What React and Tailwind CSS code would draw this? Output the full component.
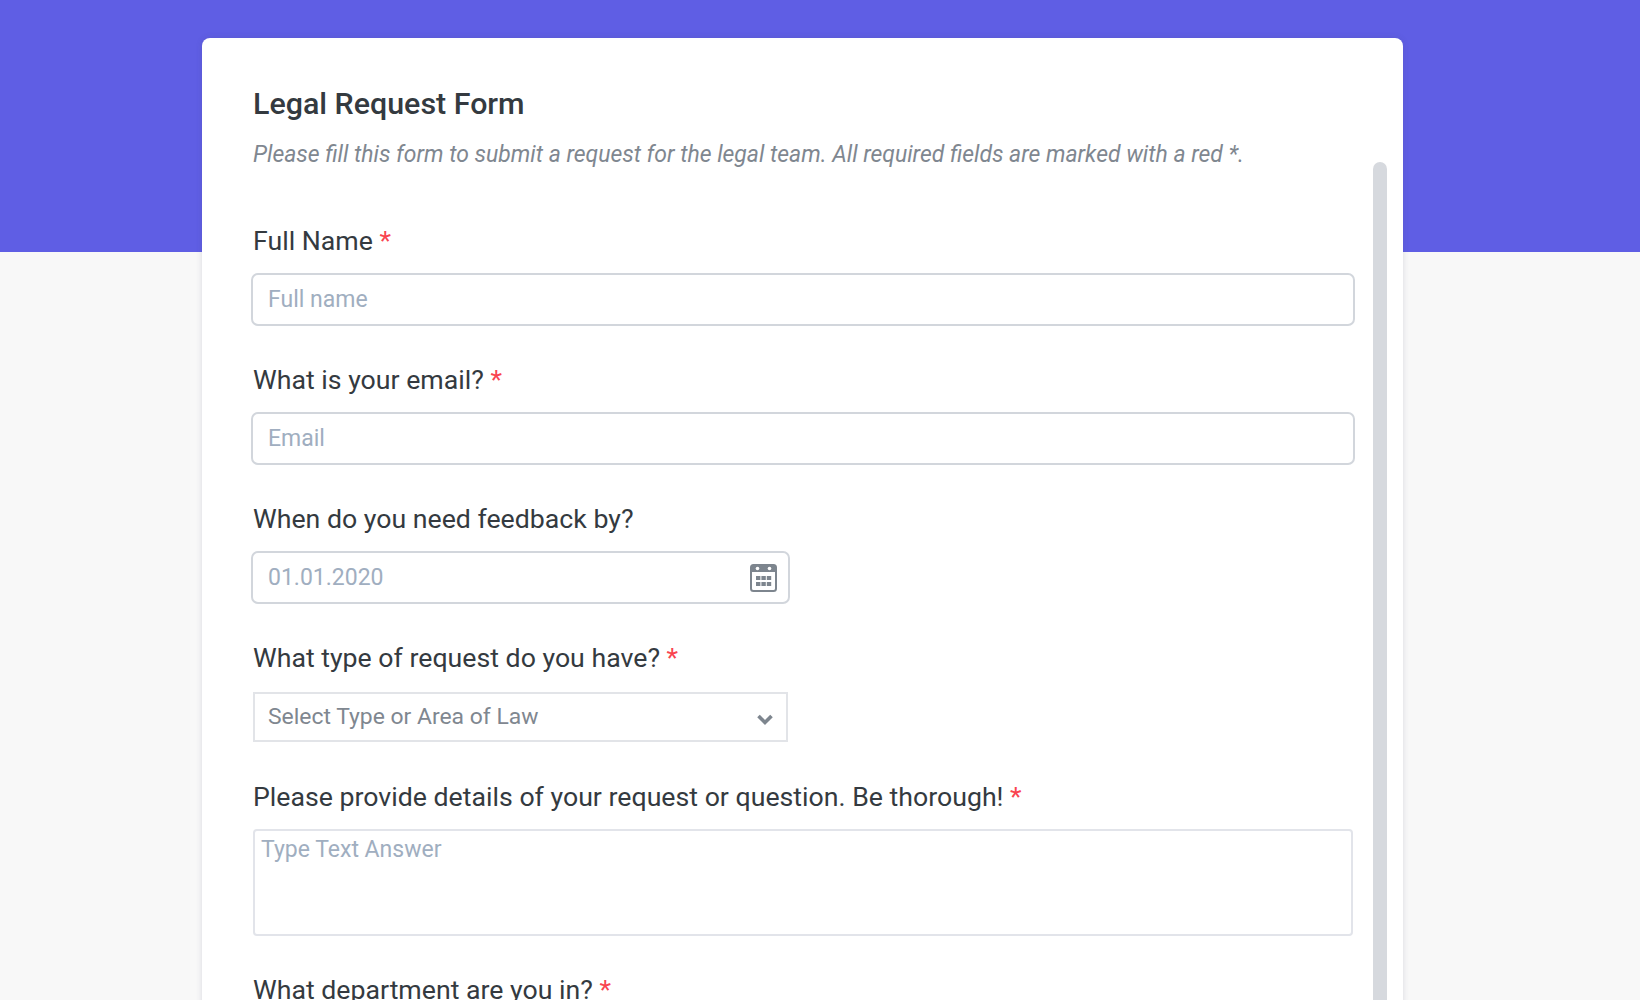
const font = "font-['Roboto',sans-serif]";

function Label({ text, required }) {
  return (
    <div className="h-[36px] mb-[14px] pl-[2px] text-[26.7px] leading-[36px] text-[#343a40] whitespace-nowrap">
      {text}
      {required && <span className="text-[#f9444f]"> *</span>}
    </div>
  );
}

const inputCls =
  "block w-full h-full pl-[15px] pr-[15px] text-[23px] bg-white border-2 border-[#d2d6dc] rounded-[7px] outline-none placeholder:text-[#a0aec0] text-[#a0aec0]";

function CalendarIcon() {
  return (
    <svg width="27" height="28" viewBox="0 0 27 28" className="absolute right-[13px] top-[13px]">
      <rect x="1" y="1" width="25" height="26" rx="2.5" fill="none" stroke="#7d858e" strokeWidth="2" />
      <path d="M1 3.5a2.5 2.5 0 0 1 2.5-2.5h20a2.5 2.5 0 0 1 2.5 2.5V8H1z" fill="#7d858e" />
      <circle cx="7.5" cy="4.5" r="1.8" fill="#fff" />
      <circle cx="19.5" cy="4.5" r="1.8" fill="#fff" />
      <g fill="#7d858e">
        <rect x="6" y="12" width="4.4" height="4" />
        <rect x="11.4" y="12" width="4.4" height="4" />
        <rect x="16.8" y="12" width="4.4" height="4" />
        <rect x="6" y="18" width="4.4" height="4" />
        <rect x="11.4" y="18" width="4.4" height="4" />
        <rect x="16.8" y="18" width="4.4" height="4" />
      </g>
    </svg>
  );
}

function Chevron() {
  return (
    <svg width="18" height="13" viewBox="0 0 18 13" className="absolute right-[14px] top-[21px]">
      <path d="M2.5 3 9 9.5 15.5 3" fill="none" stroke="#7d858e" strokeWidth="3.6" />
    </svg>
  );
}

export default function App() {
  return (
    <div className={`relative h-[1000px] overflow-hidden bg-[#f8f8f8] ${font}`}>
      <div className="h-[252px] bg-[#5f5ee4]" />
      <div className="absolute left-[202px] top-[38px] w-[1201px] h-[1000px] bg-white rounded-t-[8px] shadow-[0_0_6px_rgba(60,70,110,0.16)] pl-[49px] pr-[48px] pt-[50px]">
        <h1 className="text-[30.4px] leading-[32px] font-medium text-[#343a40] pl-[2px]">Legal Request Form</h1>
        <p className="mt-[20px] pl-[2px] text-[22.95px] leading-[30px] italic text-[#7f8790] whitespace-nowrap">
          Please fill this form to submit a request for the legal team. All required fields are marked with a red *.
        </p>

        <div className="mt-[53px] flex flex-col gap-[36px] w-[1104px]">
          <div>
            <Label text="Full Name" required />
            <div className="h-[53px]">
              <input className={inputCls} placeholder="Full name" />
            </div>
          </div>
          <div>
            <Label text="What is your email?" required />
            <div className="h-[53px]">
              <input className={inputCls} placeholder="Email" />
            </div>
          </div>
          <div>
            <Label text="When do you need feedback by?" />
            <div className="relative h-[53px] w-[539px]">
              <input className={inputCls} placeholder="01.01.2020" />
              <CalendarIcon />
            </div>
          </div>
          <div>
            <Label text="What type of request do you have?" required />
            <div className="h-[53px] pt-[2px] pb-[1px] px-[2px] w-[539px]">
              <div className="relative h-full">
                <div className="h-full flex items-center pl-[13px] text-[22.9px] text-[#7f8790] bg-white border-2 border-[#e2e4e8]">
                  Select Type or Area of Law
                </div>
                <Chevron />
              </div>
            </div>
          </div>
          <div>
            <Label text="Please provide details of your request or question. Be thorough!" required />
            <div className="px-[2px]">
              <textarea
                className="block w-full h-[107px] resize-none px-[6px] py-[4px] text-[23px] leading-[30px] bg-white border-2 border-[#e2e4ea] rounded-[4px] outline-none placeholder:text-[#a0aec0]"
                placeholder="Type Text Answer"
              />
            </div>
          </div>
          <div>
            <Label text="What department are you in?" required />
          </div>
        </div>

        <div className="absolute left-[1171px] top-[124px] w-[14px] h-[900px] rounded-t-[7px] bg-[#d6d9de]" />
      </div>
    </div>
  );
}
